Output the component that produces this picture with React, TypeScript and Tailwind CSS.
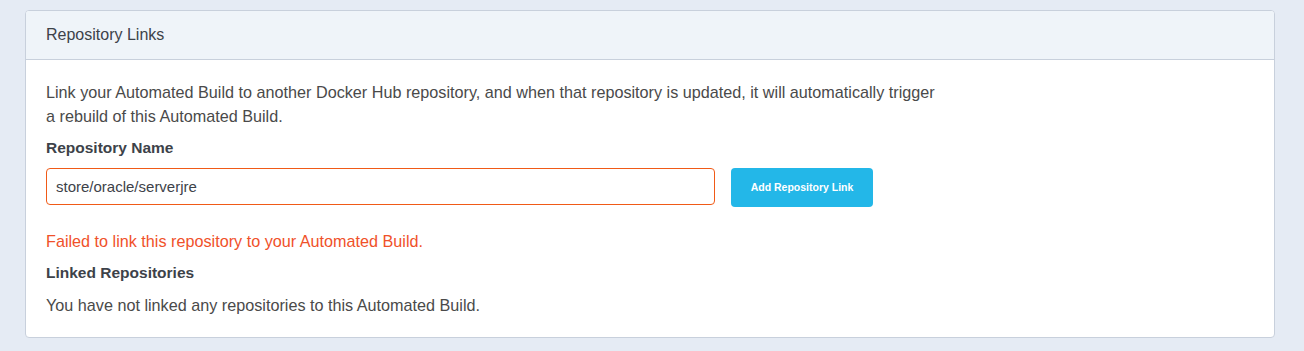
import React from 'react';

const App: React.FC = () => {
    return (
        <div className="min-h-[351px] bg-[#e5ebf4] pl-[25px] pt-[10px] pb-[14px] font-['Liberation_Sans',Arial,sans-serif] text-[#4a4a4a]">
            <div className="w-[1250px] rounded-[4px] border border-[#c8d0dc] bg-white overflow-hidden">
                {/* Header */}
                <div className="h-[49px] flex items-center px-5 bg-[#eff4f9] border-b border-[#c8d0dc] text-[16px] text-[#3d4249]">
                    Repository Links
                </div>

                {/* Body */}
                <div className="px-5 pt-[20px] pb-[20px]">
                    <p className="max-w-[895px] text-[16.2px] leading-[24px]">
                        Link your Automated Build to another Docker Hub repository, and when that repository is updated, it will automatically trigger a rebuild of this Automated Build.
                    </p>
                    <div className="mt-[10px] text-[15.5px] font-bold leading-[20px] text-[#3d4249]">Repository Name</div>
                    <div className="mt-[10px] flex items-start gap-4">
                        <input
                            type="text"
                            defaultValue="store/oracle/serverjre"
                            className="w-[669px] h-[37px] rounded-[4px] border border-[#f05a17] px-[9px] text-[15px] text-[#3d4249] outline-none"
                        />
                        <button className="w-[142px] h-[39px] rounded-[4px] bg-[#23b7e8] text-white text-[10.5px] font-bold">
                            Add Repository Link
                        </button>
                    </div>
                    <div className="mt-[22px] text-[16.2px] leading-[24px] text-[#f0512a]">
                        Failed to link this repository to your Automated Build.
                    </div>
                    <div className="mt-[8px] text-[15.5px] font-bold leading-[24px] text-[#3d4249]">Linked Repositories</div>
                    <div className="mt-[8px] text-[16.2px] leading-[24px]">
                        You have not linked any repositories to this Automated Build.
                    </div>
                </div>
            </div>
        </div>
    );
};

export default App;
